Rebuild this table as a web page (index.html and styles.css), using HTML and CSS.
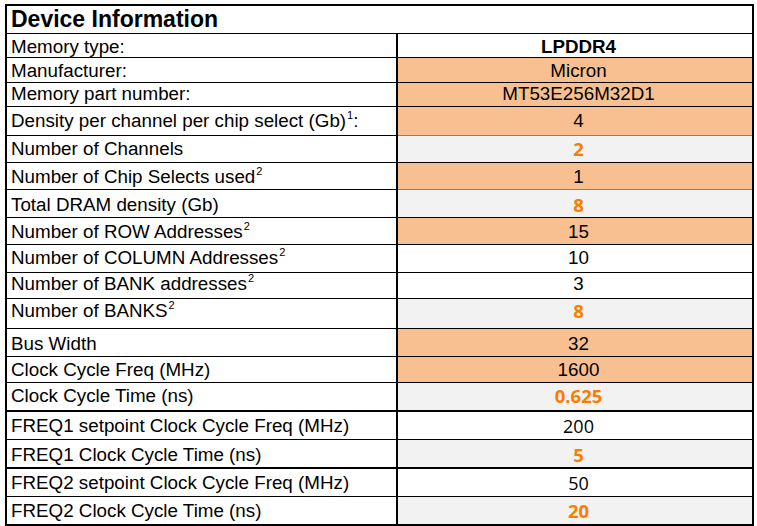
FILE: index.html
```html
<!DOCTYPE html>
<html>
<head>
<meta charset="utf-8">
<link rel="stylesheet" href="styles.css">
</head>
<body>
<div class="sheet">
  <div class="title">Device Information</div>

  <div class="row tight"><div class="lbl"><span>Memory type:</span></div><div class="val strong">LPDDR4</div></div>
  <div class="row mid"><div class="lbl"><span>Manufacturer:</span></div><div class="val in">Micron</div></div>
  <div class="row"><div class="lbl"><span>Memory part number:</span></div><div class="val in">MT53E256M32D1</div></div>
  <div class="row lo"><div class="lbl"><span>Density per channel per chip select (Gb)<sup class="fn">1</sup>:</span></div><div class="val in">4</div></div>
  <div class="row lo1"><div class="lbl"><span>Number of Channels</span></div><div class="val calc soft">2</div></div>
  <div class="row"><div class="lbl"><span>Number of Chip Selects used<sup class="fn">2</sup></span></div><div class="val in">1</div></div>
  <div class="row"><div class="lbl"><span>Total DRAM density (Gb)</span></div><div class="val calc soft">8</div></div>
  <div class="row"><div class="lbl"><span>Number of ROW Addresses<sup class="fn">2</sup></span></div><div class="val in">15</div></div>
  <div class="row lo"><div class="lbl"><span>Number of COLUMN Addresses<sup class="fn">2</sup></span></div><div class="val">10</div></div>
  <div class="row lo"><div class="lbl"><span>Number of BANK addresses<sup class="fn">2</sup></span></div><div class="val">3</div></div>
  <div class="row high"><div class="lbl"><span>Number of BANKS<sup class="fn">2</sup></span></div><div class="val calc">8</div></div>
  <div class="row"><div class="lbl"><span>Bus Width</span></div><div class="val in">32</div></div>
  <div class="row"><div class="lbl"><span>Clock Cycle Freq (MHz)</span></div><div class="val in">1600</div></div>
  <div class="row lo"><div class="lbl"><span>Clock Cycle Time (ns)</span></div><div class="val calc">0.625</div></div>
  <div class="row thick lo1"><div class="lbl"><span>FREQ1 setpoint Clock Cycle Freq (MHz)</span></div><div class="val num">200</div></div>
  <div class="row"><div class="lbl"><span>FREQ1 Clock Cycle Time (ns)</span></div><div class="val calc">5</div></div>
  <div class="row thick lo1"><div class="lbl"><span>FREQ2 setpoint Clock Cycle Freq (MHz)</span></div><div class="val num">50</div></div>
  <div class="row lo1"><div class="lbl"><span>FREQ2 Clock Cycle Time (ns)</span></div><div class="val calc">20</div></div>
</div>
</body>
</html>
```

FILE: styles.css
```css
html, body {
  margin: 0;
  padding: 0;
  background: #ffffff;
}

.sheet {
  margin: 4px 0 0 5px;
  width: 749px;
  box-sizing: border-box;
  border: 2px solid #000;
  display: grid;
  grid-template-columns: 389px 2px 354px;
  grid-template-rows: 27px 24px 25px 24px 29px 27px 27px 28px 27px 28px 26px 30px 28px 26px 28px 29px 28px 29px 28px;
  font-family: "Liberation Sans", Arial, sans-serif;
  font-size: 18.8px;
  color: #000;
}

.title {
  grid-column: 1 / 4;
  font-weight: bold;
  font-size: 23px;
  line-height: 26px;
  padding: 0 0 1px 4px;
  display: flex;
  align-items: flex-end;
  box-sizing: border-box;
}

.row {
  display: contents;
  --pb: 2px;
  --bt: 1px;
}
.row.tight { --pb: 0px; }
.row.mid { --pb: 1px; }
.row.lo1 { --pb: 3px; }
.row.lo { --pb: 4px; }
.row.high { --pb: 7px; }
.row.thick { --bt: 2px; }

.lbl, .val {
  box-sizing: border-box;
  border-top: var(--bt) solid #000;
  display: flex;
  align-items: flex-end;
  line-height: 20px;
  padding-bottom: var(--pb);
  white-space: nowrap;
  overflow: hidden;
}

.lbl {
  grid-column: 1;
  padding-left: 4px;
  border-right: 2px solid #000;
  margin-right: -2px;
}

.val {
  grid-column: 3;
  justify-content: center;
  padding-left: 7px;
  background: #fff;
}

.val.soft {
  border-top-color: #808080;
}

.val.strong {
  font-weight: bold;
}

.val.in {
  background: #f8c090;
}

.val.calc {
  background: #f2f2f2;
  color: #fa7d00;
  font-family: "Open Sans", "Liberation Sans", sans-serif;
  font-weight: bold;
  font-size: 18.5px;
}

.val.num {
  font-family: "Open Sans", "Liberation Sans", sans-serif;
  font-size: 18px;
}

.fn {
  font-size: 11px;
  line-height: 0;
  vertical-align: 8px;
  margin-left: 1px;
}
```
